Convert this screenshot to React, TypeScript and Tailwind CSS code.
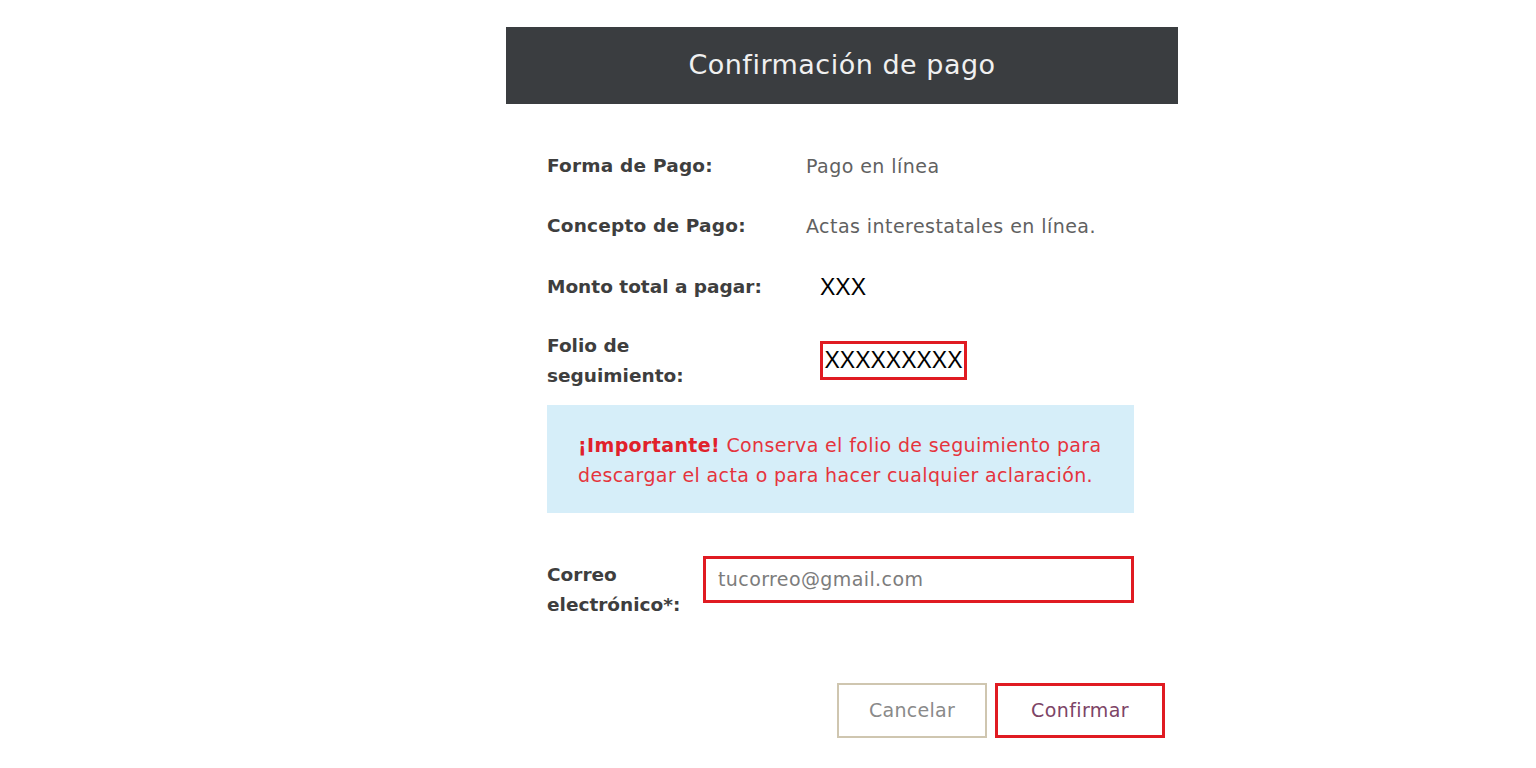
export default function App() {
  const font = { fontFamily: '"DejaVu Sans", "Open Sans", sans-serif' };
  const mono = { fontFamily: '"Liberation Sans", Arial, sans-serif' };
  return (
    <div className="min-h-screen w-full bg-white pl-[506px] pt-[27px]" style={font}>
      <div className="w-[672px]">
        {/* Header */}
        <div className="h-[77px] bg-[#3a3d40] flex items-center justify-center">
          <h1 className="text-[27px] text-[#f0f0f0] tracking-[0.5px]">Confirmación de pago</h1>
        </div>

        <div className="pl-[41px] pt-[47px]">
          {/* Rows */}
          <div className="flex items-center h-[30px]">
            <span className="w-[259px] text-[18.5px] font-bold tracking-[0.2px] text-[#3e3e3e]">Forma de Pago:</span>
            <span className="text-[19px] tracking-[0.45px] text-[#616161]">Pago en línea</span>
          </div>
          <div className="flex items-center h-[30px] mt-[30px]">
            <span className="w-[259px] text-[18.5px] font-bold tracking-[0.2px] text-[#3e3e3e]">Concepto de Pago:</span>
            <span className="text-[19px] tracking-[0.45px] text-[#616161]">Actas interestatales en línea.</span>
          </div>
          <div className="flex items-center h-[30px] mt-[31px]">
            <span className="w-[273px] text-[18.5px] font-bold text-[#3e3e3e]">Monto total a pagar:</span>
            <span className="text-[23px] text-black" style={mono}>XXX</span>
          </div>
          <div className="flex items-center mt-[29px]">
            <span className="w-[273px] text-[18.5px] font-bold text-[#3e3e3e] leading-[30px]">
              Folio de
              <br />
              seguimiento:
            </span>
            <span
              className="border-[3px] border-[#e01b22] h-[39px] w-[147px] flex items-center justify-center text-[23px] text-black -mt-[2px]"
              style={mono}
            >
              XXXXXXXXX
            </span>
          </div>

          {/* Alert */}
          <div className="mt-[14px] w-[587px] h-[108px] bg-[#d6eef9] pl-[31px] pt-[25px]">
            <p className="text-[19px] tracking-[0.37px] leading-[30px] text-[#e5343d]">
              <span className="font-bold text-[#e0212b]">¡Importante!</span> Conserva el folio de seguimiento para
              <br />
              descargar el acta o para hacer cualquier aclaración.
            </p>
          </div>

          {/* Email */}
          <div className="flex items-start mt-[44px]">
            <span className="w-[156px] text-[18.5px] font-bold text-[#3e3e3e] leading-[30px] pt-[3px]">
              Correo
              <br />
              electrónico*:
            </span>
            <div className="w-[431px] h-[47px] border-[3px] border-[#e01b22] flex items-center pl-[12px] -mt-[1px]">
              <input
                className="w-full outline-none text-[19px] tracking-[0.4px] text-[#555] placeholder:text-[#7c7c7c] bg-transparent"
                placeholder="tucorreo@gmail.com"
                style={font}
              />
            </div>
          </div>

          {/* Buttons */}
          <div className="flex justify-end w-[618px] gap-[8px] mt-[63px]">
            <button className="w-[150px] h-[55px] border-2 border-[#cfc6b0] text-[19px] tracking-[0.3px] text-[#8a8a8a] bg-white">
              Cancelar
            </button>
            <button className="w-[170px] h-[55px] border-[3px] border-[#e01b22] text-[19px] tracking-[0.4px] text-[#7d4466] bg-white">
              Confirmar
            </button>
          </div>
        </div>
      </div>
    </div>
  );
}
